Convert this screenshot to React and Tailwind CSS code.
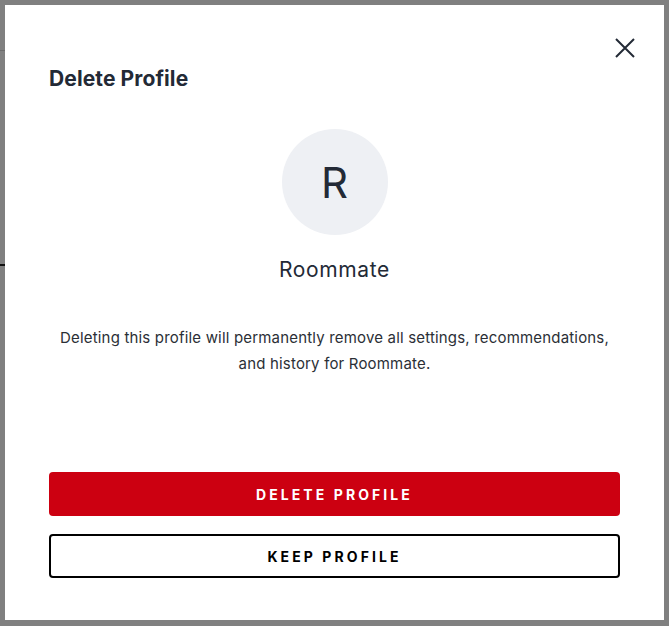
export default function App() {
  return (
    <div className="relative h-[626px] w-[669px] overflow-hidden bg-[#808080] font-['Inter',sans-serif]">
      <div className="absolute left-0 top-[50px] h-px w-[5px] bg-[#6c6c6c]" />
      <div className="absolute left-0 top-[264px] h-[2px] w-[5px] bg-[#101010]" />
      <div className="absolute left-[5px] top-[5px] flex h-[615px] w-[659px] flex-col bg-white px-[44px]">
        <button className="absolute right-[27px] top-[31px] text-[#232a36]">
          <svg width="24" height="24" viewBox="0 0 24 24" fill="none" stroke="currentColor" strokeWidth="2">
            <path d="M3 3l18 18M21 3L3 21" />
          </svg>
        </button>
        <h2 className="mt-[60px] text-[21px] font-bold leading-[28px] tracking-[0.005em] text-[#232a36]">Delete Profile</h2>
        <div className="mt-[36px] flex flex-col items-center">
          <div className="flex h-[106px] w-[106px] items-center justify-center rounded-full bg-[#eef0f4] text-[42px] text-[#232a36]">
            R
          </div>
          <div className="mt-[21px] text-[21px] leading-[28px] tracking-[0.03em] text-[#232a36]">Roommate</div>
          <p className="mt-[41px] text-center text-[15px] leading-[26px] tracking-[0.012em] text-[#2b2f36]">
            Deleting this profile will permanently remove all settings, recommendations,
            <br />
            and history for Roommate.
          </p>
        </div>
        <div className="mt-[95px] flex flex-col gap-[18px]">
          <button className="h-[44px] w-full rounded-[4px] bg-[#cc0011] text-[14px] font-bold tracking-[0.22em] text-white">
            DELETE PROFILE
          </button>
          <button className="h-[44px] w-full rounded-[4px] border-2 border-black bg-white text-[14px] font-bold tracking-[0.22em] text-black">
            KEEP PROFILE
          </button>
        </div>
      </div>
    </div>
  );
}
